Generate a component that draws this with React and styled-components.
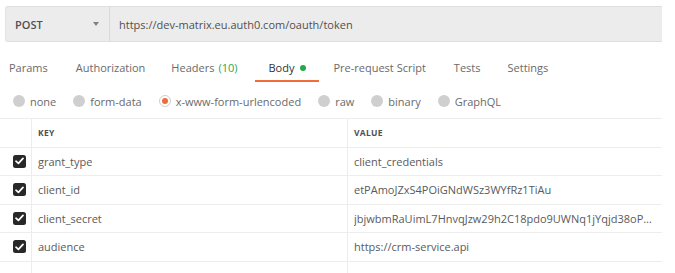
import React from "react";
import styled, { createGlobalStyle } from "styled-components";

const Global = createGlobalStyle`
  html, body { margin: 0; padding: 0; background: #fff; }
  body { font-family: "Open Sans", "Liberation Sans", sans-serif; color: #505050; }
`;

const tabs = [
  { label: "Params", gap: 28 },
  { label: "Authorization", gap: 26 },
  { label: "Headers", count: "(10)", gap: 18 },
  { label: "Body", active: true, dot: true, gap: 14 },
  { label: "Pre-request Script", gap: 28 },
  { label: "Tests", gap: 27 },
  { label: "Settings", gap: 0 },
];

const modes = [
  { label: "none" },
  { label: "form-data" },
  { label: "x-www-form-urlencoded", on: true },
  { label: "raw" },
  { label: "binary" },
  { label: "GraphQL" },
];

const rows = [
  ["grant_type", "client_credentials"],
  ["client_id", "etPAmoJZxS4POiGNdWSz3WYfRz1TiAu"],
  ["client_secret", "jbjwbmRaUimL7HnvqJzw29h2C18pdo9UWNq1jYqjd38oPwXk2sL"],
  ["audience", "https://crm-service.api"],
];

export default function App() {
  return (
    <Page>
      <Global />
      <UrlBar>
        <Method>
          POST
          <Caret />
        </Method>
        <Url>https://dev-matrix.eu.auth0.com/oauth/token</Url>
      </UrlBar>
      <Tabs>
        {tabs.map((t) => (
          <Tab key={t.label} active={t.active} gap={t.gap}>
            {t.label}
            {t.count && <Count>{t.count}</Count>}
            {t.dot && <Dot />}
          </Tab>
        ))}
      </Tabs>
      <Modes>
        {modes.map((m) => (
          <Mode key={m.label}>
            <Radio on={m.on} />
            {m.label}
          </Mode>
        ))}
      </Modes>
      <Table>
        <Row>
          <CheckCell />
          <HeadCell>KEY</HeadCell>
          <HeadCell>VALUE</HeadCell>
        </Row>
        {rows.map(([k, v]) => (
          <Row key={k}>
            <CheckCell>
              <Check>
                <svg width="9" height="8" viewBox="0 0 9 8">
                  <path d="M1 4.2 L3.4 6.4 L8 1.4" fill="none" stroke="#fff" strokeWidth="1.7" strokeLinecap="round" strokeLinejoin="round" />
                </svg>
              </Check>
            </CheckCell>
            <Cell><CellText>{k}</CellText></Cell>
            <Cell><CellText>{v}</CellText></Cell>
          </Row>
        ))}
        <Row>
          <CheckCell />
          <Cell />
          <Cell />
        </Row>
      </Table>
    </Page>
  );
}

const Page = styled.div`
  width: 675px;
  height: 273px;
  overflow: hidden;
  padding-top: 6px;
  box-sizing: border-box;
`;

const UrlBar = styled.div`
  display: flex;
  margin: 0 13px 0 5px;
  height: 36px;
  background: #ececec;
  border-top: 1px solid #dedede;
  border-bottom: 1px solid #dedede;
  border-left: 1px solid #e4e4e4;
  border-radius: 3px 0 0 3px;
  box-sizing: border-box;
`;

const Method = styled.div`
  width: 104px;
  display: flex;
  align-items: center;
  justify-content: space-between;
  padding: 0 10px 0 9px;
  box-sizing: border-box;
  border-right: 1px solid #d9d9d9;
  font-size: 11px;
  font-weight: 600;
  color: #505050;
`;

const Caret = styled.span`
  width: 0;
  height: 0;
  border-left: 3.5px solid transparent;
  border-right: 3.5px solid transparent;
  border-top: 4px solid #808080;
`;

const Url = styled.div`
  display: flex;
  align-items: center;
  padding-left: 9px;
  font-size: 11px;
  color: #505050;
`;

const Tabs = styled.div`
  display: flex;
  height: 44px;
  padding-left: 9px;
  box-sizing: border-box;
`;

const Tab = styled.div`
  position: relative;
  display: flex;
  align-items: flex-start;
  height: 44px;
  padding: 18px ${({ active }) => (active ? "13px" : "0")} 0;
  box-sizing: border-box;
  margin-right: ${({ gap }) => gap}px;
  font-size: 11px;
  line-height: 15px;
  color: ${({ active }) => (active ? "#333" : "#6a6a6a")};
  &::after {
    content: "";
    display: ${({ active }) => (active ? "block" : "none")};
    position: absolute;
    left: 0;
    right: 0;
    bottom: 4px;
    height: 2px;
    background: #f26b3a;
  }
`;

const Count = styled.span`
  color: #26a85a;
  margin-left: 4px;
`;

const Dot = styled.span`
  width: 6px;
  height: 6px;
  border-radius: 50%;
  background: #26a84a;
  margin: 5px 0 0 6px;
`;

const Modes = styled.div`
  display: flex;
  align-items: center;
  height: 30px;
  margin-bottom: 2px;
  padding-left: 13px;
`;

const Mode = styled.div`
  display: flex;
  align-items: center;
  font-size: 11px;
  color: #6a6a6a;
  margin-right: 17px;
`;

const Radio = styled.span`
  width: 12px;
  height: 12px;
  border-radius: 50%;
  background: ${({ on }) => (on ? "#fff" : "#cfcfcf")};
  border: ${({ on }) => (on ? "1px solid #cfcfcf" : "none")};
  box-sizing: border-box;
  margin-right: 5px;
  display: flex;
  align-items: center;
  justify-content: center;
  &::after {
    content: "";
    display: ${({ on }) => (on ? "block" : "none")};
    width: 6px;
    height: 6px;
    border-radius: 50%;
    background: #f26b3a;
  }
`;

const Table = styled.div`
  margin-right: 13px;
  border-top: 1px solid #ededed;
`;

const Row = styled.div`
  display: grid;
  grid-template-columns: 32px 316px minmax(0, 1fr);
  height: 28.5px;
  border-bottom: 1px solid #ededed;
  box-sizing: border-box;
`;

const CheckCell = styled.div`
  display: flex;
  align-items: center;
  justify-content: flex-end;
  padding-right: 5px;
  border-right: 1px solid #ededed;
`;

const HeadCell = styled.div`
  display: flex;
  align-items: center;
  padding-left: 6px;
  font-size: 8.5px;
  font-weight: 700;
  color: #505050;
  letter-spacing: 0.3px;
  border-right: 1px solid #ededed;
  &:last-child { border-right: none; }
`;

const Cell = styled.div`
  display: flex;
  align-items: center;
  padding-left: 6px;
  padding-right: 2px;
  min-width: 0;
  border-right: 1px solid #ededed;
  &:last-child { border-right: none; }
`;

const CellText = styled.span`
  font-size: 11px;
  color: #5a5a5a;
  white-space: nowrap;
  overflow: hidden;
  text-overflow: ellipsis;
  min-width: 0;
`;

const Check = styled.span`
  width: 13px;
  height: 13px;
  border-radius: 2.5px;
  background: #282828;
  display: flex;
  align-items: center;
  justify-content: center;
`;
